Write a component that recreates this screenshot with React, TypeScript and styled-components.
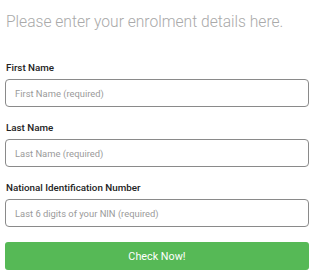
import styled, { createGlobalStyle } from "styled-components";

const GlobalStyle = createGlobalStyle`
  html, body {
    margin: 0;
    padding: 0;
    background: #ffffff;
  }
  body {
    font-family: Roboto, "Liberation Sans", Arial, sans-serif;
  }
`;

const Form = styled.form`
  width: 320px;
  height: 278px;
  box-sizing: border-box;
  padding: 12px 11px 0 5px;
  display: flex;
  flex-direction: column;
`;

const Heading = styled.h2`
  margin: 0 0 30px 1px;
  font-size: 15.6px;
  font-weight: 300;
  line-height: 20px;
  color: #a9a9a9;
  white-space: nowrap;
`;

const Field = styled.div`
  display: flex;
  flex-direction: column;
`;

const Label = styled.label`
  font-size: 9.8px;
  font-weight: 500;
  color: #222222;
  line-height: 12px;
  margin-left: 1px;
  margin-bottom: 5px;
`;

const Input = styled.input`
  box-sizing: border-box;
  height: 28px;
  width: 100%;
  border: 1px solid #8a8a8a;
  border-radius: 4px;
  padding: 0 9px;
  font-family: inherit;
  font-size: 9.4px;
  color: #333;
  margin: 0 0 15px;
  outline: none;

  &::placeholder {
    color: #9a9a9a;
  }
`;

const Button = styled.button`
  height: 28px;
  width: 100%;
  border: none;
  border-radius: 3px;
  background: #56b956;
  color: #ffffff;
  font-family: inherit;
  font-size: 10.8px;
  font-weight: 400;
  cursor: pointer;
`;

export default function App() {
  return (
    <>
      <GlobalStyle />
      <Form onSubmit={(e) => e.preventDefault()}>
        <Heading>Please enter your enrolment details here.</Heading>
        <Field>
          <Label>First Name</Label>
          <Input placeholder="First Name (required)" />
        </Field>
        <Field>
          <Label>Last Name</Label>
          <Input placeholder="Last Name (required)" />
        </Field>
        <Field>
          <Label>National Identification Number</Label>
          <Input placeholder="Last 6 digits of your NIN (required)" />
        </Field>
        <Button type="submit">Check Now!</Button>
      </Form>
    </>
  );
}
